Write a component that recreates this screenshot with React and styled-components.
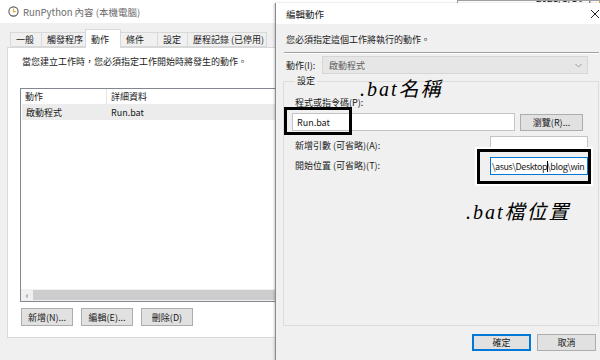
import React from 'react';
import styled, { createGlobalStyle } from 'styled-components';

const GlobalStyle = createGlobalStyle`
  html, body { margin: 0; padding: 0; overflow: hidden; }
  body {
    font-family: "Noto Sans CJK TC", "Noto Sans", sans-serif;
    font-size: 9px;
    color: #1a1a1a;
    background: #f0f0f0;
  }
  * { box-sizing: border-box; }
`;

const tabs = [
  { label: '一般', w: 32 },
  { label: '觸發程序', w: 45 },
  { label: '動作', w: 36, active: true },
  { label: '條件', w: 38 },
  { label: '設定', w: 31 },
  { label: '歷程記錄 (已停用)', w: 80 },
];

const App = () => {
  return (
    <Screen>
      <GlobalStyle />
      <BackWindow>
        <TitleBar>
          <svg width="11" height="11" viewBox="0 0 11 11">
            <circle cx="5.5" cy="5.5" r="4.6" fill="#fff" stroke="#5a5a5a" strokeWidth="1.1" />
            <path d="M5.5 2.6 V5.6 H7.8" fill="none" stroke="#e8a33a" strokeWidth="1.1" />
          </svg>
          <span>RunPython 內容 (本機電腦)</span>
        </TitleBar>
        <TabArea>
          <Tabs>
            {tabs.map((t) => (
              <Tab key={t.label} $w={t.w} $active={t.active}>{t.label}</Tab>
            ))}
          </Tabs>
          <Panel>
            <PanelIntro>當您建立工作時，您必須指定工作開始時將發生的動作。</PanelIntro>
            <ListBox>
              <ListHeader>
                <FirstCol>動作</FirstCol>
                <Col>詳細資料</Col>
              </ListHeader>
              <ListRow>
                <FirstCol $plain>啟動程式</FirstCol>
                <Col>Run.bat</Col>
              </ListRow>
              <ListSpacer />
              <HScroll>
                <ScrollArrow>‹</ScrollArrow>
                <ScrollThumb />
              </HScroll>
            </ListBox>
            <ButtonRow>
              <Button>新增(N)...</Button>
              <Button>編輯(E)...</Button>
              <Button>刪除(D)</Button>
            </ButtonRow>
          </Panel>
        </TabArea>
      </BackWindow>

      <DialogColumn>
        <Peek>
          <PeekWindow>
            <PeekText>2021/1/16 下午</PeekText>
          </PeekWindow>
        </Peek>
        <Dialog>
          <DialogTitle>
            <span>編輯動作</span>
            <svg width="10" height="10" viewBox="0 0 10 10">
              <path d="M1 1 L9 9 M9 1 L1 9" stroke="#222" strokeWidth="1" />
            </svg>
          </DialogTitle>
          <DialogBody>
            <DialogIntro>您必須指定這個工作將執行的動作。</DialogIntro>
            <Separator />
            <ActionRow>
              <ActionLabel>動作(I):</ActionLabel>
              <Select>
                <span>啟動程式</span>
                <svg width="7" height="5" viewBox="0 0 7 5">
                  <path d="M0.5 1 L3.5 4 L6.5 1" fill="none" stroke="#9a9a9a" strokeWidth="1" />
                </svg>
              </Select>
            </ActionRow>
            <GroupBox>
              <Legend>設定</Legend>
              <FieldLabel>程式或指令碼(P):</FieldLabel>
              <InputRow>
                <TextBox $w={223}>Run.bat</TextBox>
                <Button $w={63} $h={17}>瀏覽(R)...</Button>
              </InputRow>
              <OptionRow $align="flex-end">
                <FieldLabel $flush>新增引數 (可省略)(A):</FieldLabel>
                <TextBox $w={98} $h={16} />
              </OptionRow>
              <OptionRow>
                <FieldLabel $flush>開始位置 (可省略)(T):</FieldLabel>
                <TextBox $w={98} $focus>
                  \asus\Desktop<Caret />\blog\win
                </TextBox>
              </OptionRow>
            </GroupBox>
            <FooterRow>
              <Button $w={59} $h={17} $primary>確定</Button>
              <Button $w={59} $h={17}>取消</Button>
            </FooterRow>
          </DialogBody>

          <Marker style={{ left: 8, top: 104, width: 68, height: 28 }} />
          <Marker $halo style={{ left: 201, top: 146, width: 114, height: 35 }} />
          <Note style={{ left: 84, top: 74 }}>.bat名稱</Note>
          <Note style={{ left: 190, top: 197 }}>.bat檔位置</Note>
        </Dialog>
      </DialogColumn>
    </Screen>
  );
};

export default App;

const Screen = styled.div`
  width: 600px;
  height: 360px;
  display: flex;
  overflow: hidden;
  background: #f0f0f0;
`;

const BackWindow = styled.div`
  width: 275px;
  flex-shrink: 0;
  display: flex;
  flex-direction: column;
  overflow: hidden;
`;

const TitleBar = styled.div`
  height: 23px;
  background: #fff;
  display: flex;
  align-items: center;
  gap: 4px;
  padding-left: 8px;
  color: #6a6a6a;
  font-size: 9.5px;
  white-space: nowrap;
`;

const TabArea = styled.div`
  padding: 6px 0 0 7px;
  display: flex;
  flex-direction: column;
`;

const Tabs = styled.div`
  display: flex;
  align-items: flex-end;
  height: 18px;
  padding-left: 3px;
  position: relative;
  z-index: 1;
`;

const Tab = styled.div`
  width: ${(p) => p.$w}px;
  height: ${(p) => (p.$active ? 19 : 15)}px;
  margin-bottom: ${(p) => (p.$active ? -1 : 0)}px;
  margin-left: -1px;
  padding-left: 5px;
  display: flex;
  align-items: center;
  white-space: nowrap;
  background: ${(p) => (p.$active ? '#fff' : '#f0f0f0')};
  border: 1px solid #d9d9d9;
  border-bottom: ${(p) => (p.$active ? 'none' : '1px solid #d9d9d9')};
  &:first-child { margin-left: 0; }
`;

const Panel = styled.div`
  width: 290px;
  height: 291px;
  background: #fff;
  border: 1px solid #d9d9d9;
  padding-left: 12px;
  display: flex;
  flex-direction: column;
`;

const PanelIntro = styled.div`
  margin-top: 8px;
  padding-left: 2px;
  line-height: 12px;
  white-space: nowrap;
`;

const ListBox = styled.div`
  margin-top: 20px;
  width: 300px;
  height: 214px;
  border: 1px solid #828790;
  display: flex;
  flex-direction: column;
`;

const ListHeader = styled.div`
  height: 15px;
  display: flex;
  align-items: center;
`;

const ListRow = styled.div`
  height: 16px;
  display: flex;
  align-items: center;
  background: #ececec;
  margin-left: 1px;
`;

const FirstCol = styled.div`
  width: ${(p) => (p.$plain ? 85 : 86)}px;
  height: 100%;
  display: flex;
  align-items: center;
  padding-left: 4px;
  border-right: ${(p) => (p.$plain ? 'none' : '1px solid #e5e5e5')};
`;

const Col = styled.div`
  padding-left: 4px;
`;

const ListSpacer = styled.div`
  flex: 1;
`;

const HScroll = styled.div`
  height: 12px;
  display: flex;
  background: #f0f0f0;
`;

const ScrollArrow = styled.div`
  width: 12px;
  display: flex;
  align-items: center;
  justify-content: center;
  font-size: 9px;
  color: #606060;
`;

const ScrollThumb = styled.div`
  flex: 1;
  margin: 1px 0;
  background: #cdcdcd;
`;

const ButtonRow = styled.div`
  display: flex;
  gap: 8px;
  margin-top: 6px;
  padding-left: 1px;
`;

const Button = styled.div`
  width: ${(p) => p.$w || 52}px;
  height: ${(p) => p.$h || 18}px;
  display: flex;
  align-items: center;
  justify-content: center;
  background: #e1e1e1;
  border: 1px solid ${(p) => (p.$primary ? '#0078d7' : '#adadad')};
  box-shadow: ${(p) => (p.$primary ? 'inset 0 0 0 1px #0078d7' : 'none')};
  white-space: nowrap;
  flex-shrink: 0;
`;

const DialogColumn = styled.div`
  flex: 1;
  display: flex;
  flex-direction: column;
`;

const Peek = styled.div`
  height: 3px;
  display: flex;
  background: #fff;
  overflow: hidden;
`;

const PeekWindow = styled.div`
  margin-left: 182px;
  flex: 1;
  border-left: 1px solid #a0a0a0;
  border-top: 1px solid #a0a0a0;
  background: #fff;
  overflow: hidden;
`;

const PeekText = styled.div`
  margin: -9px 0 0 78px;
  font-size: 10px;
  line-height: 12px;
  white-space: nowrap;
`;

const Dialog = styled.div`
  flex: 1;
  position: relative;
  background: #f0f0f0;
  border-left: 1px solid #8c8c8c;
  display: flex;
  flex-direction: column;
  box-shadow: -1px 0 2px rgba(0, 0, 0, 0.2);
`;

const DialogTitle = styled.div`
  height: 21px;
  background: #fff;
  display: flex;
  align-items: center;
  justify-content: space-between;
  padding: 0 5px 0 10px;
  font-size: 9.5px;
`;

const DialogBody = styled.div`
  padding: 0 6px 0 7px;
  display: flex;
  flex-direction: column;
`;

const DialogIntro = styled.div`
  margin-top: 10px;
  padding-left: 3px;
  line-height: 12px;
  white-space: nowrap;
`;

const Separator = styled.div`
  margin: 6px 0 0 1px;
  border-top: 1px solid #a0a0a0;
  border-bottom: 1px solid #fff;
`;

const ActionRow = styled.div`
  margin-top: 2px;
  height: 18px;
  display: flex;
  align-items: center;
  padding-left: 3px;
`;

const ActionLabel = styled.div`
  width: 36px;
`;

const Select = styled.div`
  width: 266px;
  height: 18px;
  display: flex;
  align-items: center;
  justify-content: space-between;
  padding: 0 5px 0 6px;
  background: #e6e6e6;
  border: 1px solid #d6d6d6;
  color: #5e5e5e;
`;

const GroupBox = styled.fieldset`
  margin: 1px 0 0 0;
  min-width: 0;
  height: 251px;
  padding: 0 10px 0 8px;
  border: 1px solid #dcdcdc;
  display: flex;
  flex-direction: column;
`;

const Legend = styled.legend`
  padding: 0 2px;
  margin-left: 3px;
  line-height: 12px;
`;

const FieldLabel = styled.div`
  margin-top: ${(p) => (p.$flush ? 0 : 10)}px;
  padding-left: 3px;
  line-height: 12px;
  white-space: nowrap;
`;

const InputRow = styled.div`
  margin-top: 4px;
  display: flex;
  align-items: center;
  gap: 5px;
`;

const OptionRow = styled.div`
  margin-top: 5px;
  display: flex;
  align-items: ${(p) => p.$align || 'center'};
  justify-content: space-between;
`;

const TextBox = styled.div`
  width: ${(p) => p.$w}px;
  height: ${(p) => p.$h || 18}px;
  background: #fff;
  border: 1px solid ${(p) => (p.$focus ? '#0078d7' : '#c4c4c4')};
  display: flex;
  align-items: center;
  padding-left: ${(p) => (p.$focus ? 1 : 4)}px;
  letter-spacing: ${(p) => (p.$focus ? '-0.4px' : 'normal')};
  white-space: nowrap;
  overflow: hidden;
  flex-shrink: 0;
`;

const Caret = styled.span`
  display: inline-block;
  width: 1px;
  height: 11px;
  background: #000;
  margin: 0 -1px 0 0;
`;

const FooterRow = styled.div`
  display: flex;
  justify-content: flex-end;
  gap: 6px;
  margin-top: 8px;
  padding-right: 3px;
`;

const Marker = styled.div`
  position: absolute;
  border: 3px solid #000;
  box-shadow: ${(p) => (p.$halo ? '0 0 0 2px #fff' : 'none')};
  pointer-events: none;
`;

const Note = styled.div`
  position: absolute;
  font-family: "Liberation Serif", "Noto Sans CJK TC", serif;
  font-style: italic;
  font-size: 20px;
  line-height: 24px;
  letter-spacing: 2px;
  color: #000;
  white-space: nowrap;
`;
